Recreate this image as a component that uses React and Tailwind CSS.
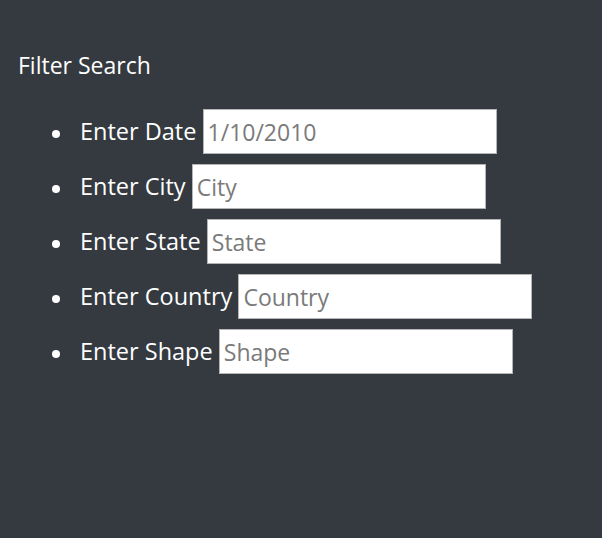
export default function App() {
  const rows = [
    ["Enter Date", "1/10/2010"],
    ["Enter City", "City"],
    ["Enter State", "State"],
    ["Enter Country", "Country"],
    ["Enter Shape", "Shape"],
  ];
  return (
    <div className="h-[538px] w-[602px] bg-[#343a40] text-white pt-[49px] pl-[18px]" style={{ fontFamily: '"Open Sans", sans-serif' }}>
      <div className="text-[23px] leading-[32px]">Filter Search</div>
      <ul className="mt-[28px] list-none pl-[34px] flex flex-col gap-[11px] text-[23.5px]">
        {rows.map(([label, ph]) => (
          <li key={label} className="h-[44px] leading-[44px]">
            <span className="inline-block align-middle w-[8px] h-[8px] rounded-full bg-white mr-[20px]" />
            {label}{" "}
            <input
              placeholder={ph}
              className="relative -top-[2px] align-middle h-[45px] w-[294px] bg-white border border-[#b5b5b5] px-[4px] text-[23px] text-black placeholder:text-[#7a7a7a]"
            />
          </li>
        ))}
      </ul>
    </div>
  );
}
